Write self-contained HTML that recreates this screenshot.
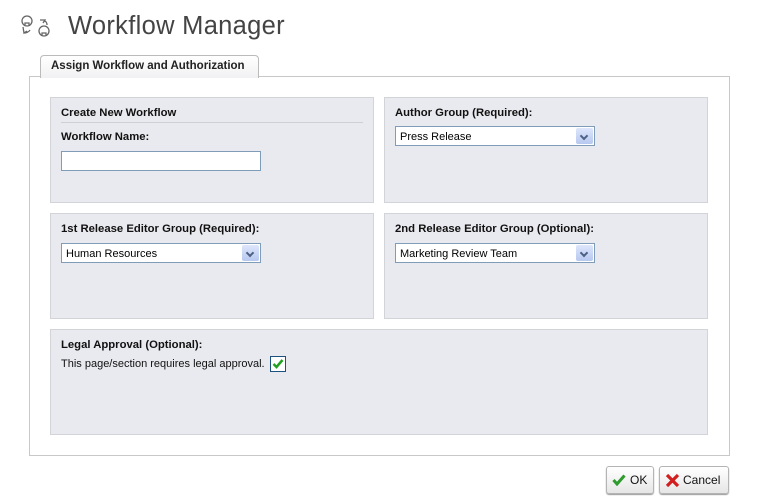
<!DOCTYPE html>
<html><head><style>
*{margin:0;padding:0;box-sizing:border-box}
body{width:780px;height:504px;background:#fff;font-family:"Liberation Sans",sans-serif;position:relative;overflow:hidden}
.a{position:absolute}
.title{left:68px;top:12px;font-size:25.5px;color:#444;letter-spacing:0.3px}
.tab{left:40px;top:55px;width:219px;height:23px;border:1px solid #bbb;border-bottom:none;border-radius:4px 4px 0 0;background:linear-gradient(#fff,#f1f1f3);font-size:11.5px;font-weight:bold;color:#222;padding:4px 0 0 10px;z-index:2}
.box{left:29px;top:76px;width:701px;height:380px;border:1px solid #c8c8c8}
.p{background:#e9eaef;border:1px solid #d3d4d8}
.lbl{font-size:11.3px;font-weight:bold;color:#111}
.sel{height:20px;border:1px solid #7f9db9;background:#fff;font-size:11px;color:#000;padding:4px 0 0 4px}
.arr{position:absolute;right:1px;top:1px;width:17px;height:16px;background:linear-gradient(#dde6fb,#b7c8f0);border-radius:2px}
.arr:after{content:"";position:absolute;left:5px;top:5px;width:4px;height:4px;border-right:2px solid #4d6185;border-bottom:2px solid #4d6185;transform:rotate(45deg)}
.btn{height:28px;border:1px solid #b4b4b4;border-radius:3px;background:linear-gradient(#fff,#e6e6e6);font-size:12px;color:#111;box-shadow:0 1px 1px #999}
</style></head><body>
<svg class="a" style="left:20px;top:14px" width="36" height="26" viewBox="0 0 36 26" fill="none" stroke="#666" stroke-width="1.3">
<circle cx="7" cy="7" r="5"/><path d="M5 12v-3h4v3M3 13l1 6 3-2M4 19c2 0 5-1 6-3"/>
<circle cx="24" cy="17" r="5"/><path d="M22 22v-3h4v3M20 6h5l-2 3M24 7c2 0 3 2 3 4"/>
</svg>
<div class="a title">Workflow Manager</div>
<div class="a tab">Assign Workflow and Authorization</div>
<div class="a box"></div>

<div class="a p" style="left:50px;top:97px;width:324px;height:106px">
 <div class="a lbl" style="left:10px;top:9px">Create New Workflow</div>
 <div class="a" style="left:10px;top:24px;width:302px;height:1px;background:#d0d0d4"></div>
 <div class="a lbl" style="left:10px;top:33px">Workflow Name:</div>
 <div class="a" style="left:10px;top:53px;width:200px;height:20px;border:1px solid #7f9db9;background:#fff"></div>
</div>
<div class="a p" style="left:384px;top:97px;width:324px;height:106px">
 <div class="a lbl" style="left:10px;top:9px">Author Group (Required):</div>
 <div class="a sel" style="left:10px;top:28px;width:200px">Press Release<div class="arr"></div></div>
</div>
<div class="a p" style="left:50px;top:213px;width:324px;height:106px">
 <div class="a lbl" style="left:10px;top:9px">1st Release Editor Group (Required):</div>
 <div class="a sel" style="left:10px;top:29px;width:200px">Human Resources<div class="arr"></div></div>
</div>
<div class="a p" style="left:384px;top:213px;width:324px;height:106px">
 <div class="a lbl" style="left:10px;top:9px">2nd Release Editor Group (Optional):</div>
 <div class="a sel" style="left:10px;top:29px;width:200px">Marketing Review Team<div class="arr"></div></div>
</div>
<div class="a p" style="left:50px;top:329px;width:658px;height:106px">
 <div class="a lbl" style="left:10px;top:9px">Legal Approval (Optional):</div>
 <div class="a" style="left:10px;top:28px;font-size:11px;color:#111">This page/section requires legal approval.</div>
 <div class="a" style="left:219px;top:26px;width:16px;height:16px;border:1px solid #1c5180;background:#fff">
  <svg width="14" height="14" viewBox="0 0 14 14"><path d="M2.5 7l3 3 6-7" stroke="#21a121" stroke-width="2.5" fill="none"/></svg>
 </div>
</div>

<div class="a btn" style="left:606px;top:466px;width:48px">
 <svg class="a" style="left:5px;top:7px" width="14" height="12" viewBox="0 0 14 12"><path d="M1.5 6l3.5 4 7.5-8.5" stroke="#2d9b2d" stroke-width="3" fill="none"/></svg>
 <span class="a" style="left:23px;top:6px">OK</span>
</div>
<div class="a btn" style="left:659px;top:466px;width:70px">
 <svg class="a" style="left:5px;top:6px" width="15" height="15" viewBox="0 0 15 15"><path d="M2 2l11 11M13 2L2 13" stroke="#d21e1e" stroke-width="3.2"/></svg>
 <span class="a" style="left:23px;top:6px">Cancel</span>
</div>
</body></html>
